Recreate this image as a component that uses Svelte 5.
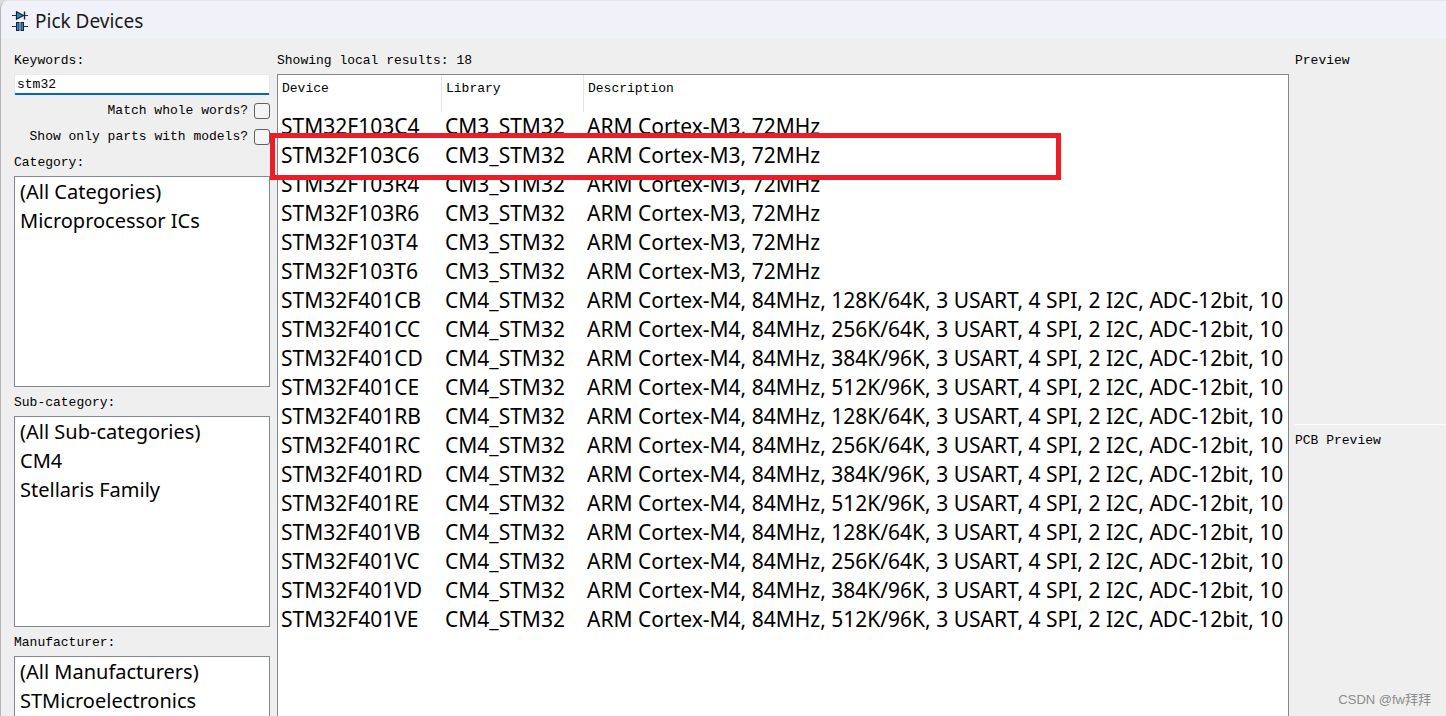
<script>
  const f103 = ['C4', 'C6', 'R4', 'R6', 'T4', 'T6'].map((s) => ({
    device: 'STM32F103' + s,
    library: 'CM3_STM32',
    description: 'ARM Cortex-M3, 72MHz'
  }));
  const memory = { B: '128K/64K', C: '256K/64K', D: '384K/96K', E: '512K/96K' };
  const f401 = ['CB', 'CC', 'CD', 'CE', 'RB', 'RC', 'RD', 'RE', 'VB', 'VC', 'VD', 'VE'].map((s) => ({
    device: 'STM32F401' + s,
    library: 'CM4_STM32',
    description: `ARM Cortex-M4, 84MHz, ${memory[s[1]]}, 3 USART, 4 SPI, 2 I2C, ADC-12bit, 10`
  }));
  const devices = [...f103, ...f401];
  const marked = 'STM32F103C6';

  const lists = [
    { id: 'category', label: 'Category:', options: ['(All Categories)', 'Microprocessor ICs'] },
    { id: 'subcategory', label: 'Sub-category:', options: ['(All Sub-categories)', 'CM4', 'Stellaris Family'] },
    { id: 'manufacturer', label: 'Manufacturer:', options: ['(All Manufacturers)', 'STMicroelectronics'] }
  ];

  let keywords = $state('stm32');
</script>

<div class="window">
  <header class="titlebar">
    <svg width="18" height="22" viewBox="0 0 18 22" aria-hidden="true">
      <path d="M1 5.5H17M1 16.5H5M13 16.5H17" stroke="#2b3440" stroke-width="1.2" />
      <path d="M5.5 1.8V9.2L12.5 5.5Z" fill="#1c8ee0" stroke="#17232f" stroke-width="1.2" />
      <path d="M13.5 1.5V9.5" stroke="#17232f" stroke-width="1.4" />
      <rect x="5.5" y="12.5" width="2.5" height="8" fill="#1c8ee0" stroke="#17232f" />
      <rect x="10" y="12.5" width="2.5" height="8" fill="#1c8ee0" stroke="#17232f" />
    </svg>
    <h1>Pick Devices</h1>
  </header>

  <main>
    <section class="filters">
      <label class="caption" for="keywords">Keywords:</label>
      <input id="keywords" class="keywords" type="text" bind:value={keywords} />
      <label class="check">Match whole words?<input type="checkbox" /></label>
      <label class="check">Show only parts with models?<input type="checkbox" /></label>
      <div class="groups">
        {#each lists as list}
          <div class="group">
            <label for={list.id}>{list.label}</label>
            <select id={list.id} size="7">
              {#each list.options as option}
                <option>{option}</option>
              {/each}
            </select>
          </div>
        {/each}
      </div>
    </section>

    <section class="results">
      <div class="caption">Showing local results: {devices.length}</div>
      <div class="grid">
        <table>
          <colgroup><col class="device" /><col class="library" /><col /></colgroup>
          <thead>
            <tr><th>Device</th><th>Library</th><th>Description</th></tr>
          </thead>
          <tbody>
            {#each devices as d}
              <tr>
                <td>
                  {d.device}
                  {#if d.device === marked}<span class="marker"></span>{/if}
                </td>
                <td>{d.library}</td>
                <td>{d.description}</td>
              </tr>
            {/each}
          </tbody>
        </table>
      </div>
    </section>

    <aside>
      <section class="preview"><div class="caption">Preview</div></section>
      <section class="pcb">PCB Preview</section>
    </aside>
  </main>
  <div class="credit">CSDN @fw拜拜</div>
</div>

<style>
  :global(body) {
    margin: 0;
    background: #dcdcdf;
  }
  .window {
    position: relative;
    box-sizing: border-box;
    height: 100vh;
    overflow: hidden;
    display: flex;
    flex-direction: column;
    border-left: 1px solid #b4b4b4;
    border-top: 1px solid #e6e6ea;
    border-top-left-radius: 9px;
    background: #efefef;
    color: #000;
    font: 13px/16px 'Liberation Mono', monospace;
  }
  .titlebar {
    box-sizing: border-box;
    display: flex;
    align-items: center;
    gap: 6px;
    height: 38px;
    flex: none;
    padding: 2px 0 0 10px;
    background: #f1f2f9;
  }
  h1 {
    margin: 0;
    font: 19px/24px 'Noto Sans', sans-serif;
    color: #1a1a1a;
  }
  main {
    flex: 1;
    min-height: 0;
    display: grid;
    grid-template-columns: 256px minmax(0, 1fr) 151px;
    padding-left: 13px;
  }
  .filters,
  .results,
  aside {
    display: flex;
    flex-direction: column;
    min-height: 0;
  }
  .results {
    margin: 0 6px 0 7px;
  }
  .caption {
    padding: 14px 0 5px;
    flex: none;
  }
  .keywords {
    box-sizing: border-box;
    width: 100%;
    height: 21px;
    margin-bottom: 3px;
    padding: 1px 2px 0;
    border: 1px solid #e8e8e8;
    border-bottom: 2px solid #0067c0;
    border-radius: 2px;
    background: #fff;
    font: inherit;
    color: inherit;
    outline: none;
    flex: none;
  }
  .check {
    display: flex;
    justify-content: flex-end;
    align-items: center;
    gap: 6px;
    height: 26px;
    flex: none;
  }
  .check input {
    appearance: none;
    box-sizing: border-box;
    width: 16px;
    height: 16px;
    margin: 0;
    border: 1px solid #626262;
    border-radius: 3px;
    background: #f4f4f4;
  }
  .check input:checked {
    background: #0067c0;
  }
  .groups {
    display: flex;
    flex-direction: column;
    gap: 8px;
    padding-top: 5px;
  }
  .group {
    display: flex;
    flex-direction: column;
    gap: 5px;
    flex: none;
  }
  select {
    box-sizing: border-box;
    width: 100%;
    height: 211px;
    padding: 1px 3px;
    border: 1px solid #828790;
    border-radius: 0;
    background: #fff;
    overflow: hidden;
    outline: none;
    font: 20px/29px 'Noto Sans', sans-serif;
    color: #000;
  }
  option {
    height: 29px;
    min-height: 29px;
    padding: 0 2px;
    font: 20px/29px 'Noto Sans', sans-serif;
  }
  .grid {
    flex: 1;
    border: 1px solid #828790;
    border-bottom: 0;
    background: #fff;
    min-height: 0;
  }
  table {
    width: 100%;
    table-layout: fixed;
    border-collapse: separate;
    border-spacing: 0;
  }
  .device {
    width: 164px;
  }
  .library {
    width: 142px;
  }
  th {
    box-sizing: border-box;
    height: 37px;
    padding: 6px 4px;
    border-right: 1px solid #e5e5e5;
    text-align: left;
    vertical-align: top;
    font-weight: 400;
  }
  th:last-child {
    border-right: 0;
  }
  td {
    position: relative;
    height: 29px;
    padding: 0 0 0 3px;
    white-space: nowrap;
    font: 21px/29px 'Noto Sans', sans-serif;
  }
  td:last-child {
    overflow: hidden;
  }
  .marker {
    position: absolute;
    z-index: 1;
    left: -8px;
    top: -8px;
    box-sizing: border-box;
    width: 791px;
    height: 47px;
    border: 5px solid #ee1c24;
    pointer-events: none;
  }
  .preview {
    flex: none;
    height: 385px;
    border-bottom: 1px solid #fff;
  }
  .pcb {
    padding-top: 8px;
  }
  .credit {
    position: absolute;
    right: 15px;
    bottom: 6px;
    font: 13px/20px 'Liberation Sans', 'Noto Sans CJK SC', sans-serif;
    color: #8c8c8c;
  }
</style>
